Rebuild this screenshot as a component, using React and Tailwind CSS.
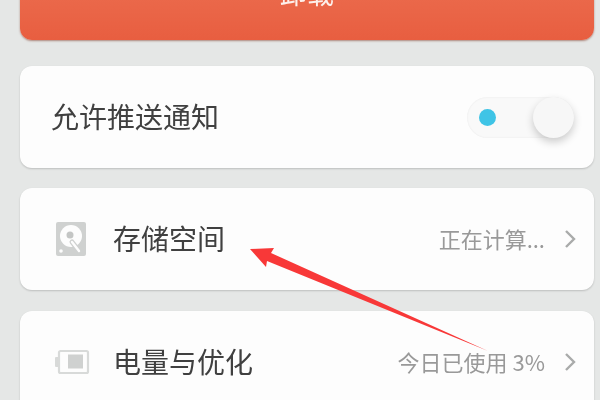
import React from "react";

const HddIcon = () => (
  <svg width="32" height="36" viewBox="0 0 32 36" className="ml-px shrink-0">
    <rect x="1" y="1" width="30" height="34" rx="2" fill="#cfd1d0" />
    <circle cx="16" cy="15" r="11" fill="#fdfdfd" />
    <circle cx="15" cy="14" r="3.5" fill="#c4c6c5" />
    <path d="M17 21 L24 30" stroke="#cfd1d0" strokeWidth="5" strokeLinecap="round" />
    <path d="M17 21 L24 30" stroke="#fdfdfd" strokeWidth="2.4" strokeLinecap="round" />
    <circle cx="6" cy="30" r="1.8" fill="#fdfdfd" />
  </svg>
);

const BatteryIcon = () => (
  <svg width="36" height="26" viewBox="0 0 36 26" className="shrink-0">
    <rect x="1" y="8" width="4" height="10" rx="1" fill="#d8dad9" />
    <rect x="5" y="2" width="29" height="22" rx="1.5" fill="none" stroke="#d8dad9" strokeWidth="2.2" />
    <rect x="14" y="5.5" width="15" height="14" fill="#cfd1d0" />
  </svg>
);

const Chevron = () => (
  <svg width="12" height="20" viewBox="0 0 12 20" className="shrink-0">
    <path d="M2 2 L10 10 L2 18" fill="none" stroke="#a9abaa" strokeWidth="2.4" />
  </svg>
);

const Row = ({ icon, title, value, className }) => (
  <div className={`flex h-[102px] items-center rounded-xl bg-[#fdfdfd] pl-[34px] pr-[18px] shadow-[0_1px_2px_rgba(0,0,0,0.18)] ${className}`}>
    <div className="flex w-[59px] shrink-0">{icon}</div>
    <span className="pb-[2px] text-[28px] leading-none text-[#404040]">{title}</span>
    <span className="ml-auto pb-[3px] text-[22px] leading-none text-[#999]">{value}</span>
    <div className="ml-[19px]">
      <Chevron />
    </div>
  </div>
);

export default function App() {
  return (
    <div
      className="relative h-[400px] w-[600px] overflow-hidden bg-[#e5e7e6] pl-[20px] pr-[6px] blur-[0.4px]"
      style={{ fontFamily: '"Noto Sans CJK SC", "Noto Sans", sans-serif' }}
    >
      <div className="-mt-[62px] flex h-[102px] items-center justify-center rounded-xl bg-gradient-to-b from-[#ee7658] to-[#e85e40] pt-[6px] text-[27px] leading-none text-[#fdf0eb] shadow-[0_1px_2px_rgba(120,40,20,0.5)]">
        卸载
      </div>

      <div className="mt-[26px] flex h-[102px] items-center justify-between rounded-xl bg-[#fdfdfd] pl-[31px] pr-[20px] shadow-[0_1px_2px_rgba(0,0,0,0.18)]">
        <span className="pb-[2px] text-[28px] leading-none text-[#404040]">允许推送通知</span>
        <div className="relative flex h-[41px] w-[107px] items-center rounded-full bg-[#f9f9f9] pl-[12px] shadow-[inset_0_0_2px_rgba(0,0,0,0.08)]">
          <div className="h-[17px] w-[17px] rounded-full bg-[#3fc4e6]" />
          <div className="absolute right-0 top-0 h-[41px] w-[41px] rounded-full bg-[#f7f7f7] shadow-[0_4px_8px_rgba(0,0,0,0.2)]" />
        </div>
      </div>

      <Row className="mt-[20px]" icon={<HddIcon />} title="存储空间" value="正在计算..." />
      <Row className="mt-[21px]" icon={<BatteryIcon />} title="电量与优化" value="今日已使用 3%" />

      <svg width="600" height="400" viewBox="0 0 600 400" className="pointer-events-none absolute left-0 top-0">
        <path d="M250 249 L274 248 L271 253 L488 351 L267 261 L266 267 Z" fill="#f83838" />
      </svg>
    </div>
  );
}
